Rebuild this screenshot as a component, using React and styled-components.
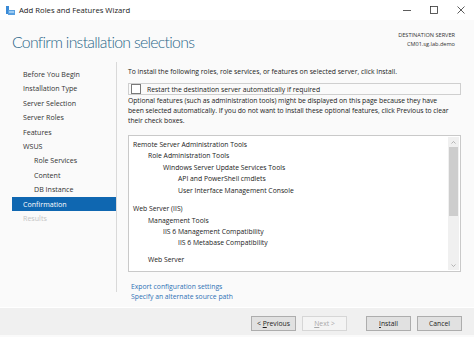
import styled, { createGlobalStyle } from "styled-components";

const Global = createGlobalStyle`
  html, body { margin: 0; padding: 0; background: #fff; }
  body { font-family: "Segoe UI", "Open Sans", "Noto Sans", sans-serif; }
`;

const Window = styled.div`
  width: 474px;
  height: 337px;
  display: flex;
  flex-direction: column;
  background: #fafafa;
  overflow: hidden;
  color: #1a1a1a;
`;

const TitleBar = styled.div`
  height: 20px;
  background: #fff;
  display: flex;
  align-items: center;
  padding-left: 6px;
  font-size: 7.7px;
  color: #222;
`;

const AppIcon = styled.svg`
  width: 9px;
  height: 9px;
  margin-right: 4px;
`;

const TitleText = styled.span`
  flex: 1;
`;

const WinButton = styled.div`
  width: 27px;
  height: 20px;
  display: flex;
  align-items: center;
  justify-content: center;
`;

const Header = styled.div`
  height: 40px;
  display: flex;
  justify-content: space-between;
  align-items: flex-start;
  padding: 0 19px 0 12px;
`;

const PageTitle = styled.h1`
  margin: 12px 0 0;
  font-family: "Lato", "Open Sans", sans-serif;
  font-size: 15.8px;
  font-weight: 300;
  letter-spacing: -0.7px;
  color: #2a6789;
`;

const ServerInfo = styled.div`
  margin-top: 11px;
  text-align: right;
  font-size: 5.6px;
  line-height: 9px;
  color: #333;
`;

const Main = styled.div`
  flex: 1;
  display: flex;
  min-height: 0;
`;

const Nav = styled.div`
  width: 116px;
  margin: 2px 0 15px;
  border-right: 1px solid #d9d9d9;
  padding-top: 5px;
  display: flex;
  flex-direction: column;
`;

const NavItem = styled.div`
  height: 14.4px;
  line-height: 14.4px;
  margin-left: 12px;
  padding-left: ${(p) => (p.$sub ? 22 : 11)}px;
  font-size: 7.1px;
  color: ${(p) => (p.$active ? "#fff" : p.$disabled ? "#c4c4c4" : "#333")};
  background: ${(p) => (p.$active ? "#0f67b1" : "transparent")};
`;

const Content = styled.div`
  flex: 1;
  padding: 6px 13px 0 11px;
  display: flex;
  flex-direction: column;
  font-size: 6.8px;
  color: #222;
`;

const Intro = styled.div`
  line-height: 11px;
`;

const CheckRow = styled.label`
  margin-top: 6px;
  height: 10px;
  border: 1px solid #cfcfcf;
  display: flex;
  align-items: center;
  gap: 6px;
  padding-left: 2px;
`;

const CheckBox = styled.span`
  width: 8px;
  height: 8px;
  border: 1px solid #7a7a7a;
  background: #fff;
`;

const Note = styled.p`
  margin: 1px 0 0;
  line-height: 10px;
  white-space: nowrap;
  letter-spacing: -0.04px;
`;

const ListBox = styled.div`
  margin-top: 9px;
  height: 135px;
  border: 1px solid #c9c9c9;
  background: #fff;
  display: flex;
`;

const ListItems = styled.div`
  flex: 1;
  padding: 3px 0 0 4px;
`;

const ListItem = styled.div`
  height: ${(p) => p.$h || 11.3}px;
  line-height: 11.3px;
  padding-left: ${(p) => p.$level * 15}px;
`;

const ScrollBar = styled.div`
  width: 11px;
  margin: 1px 1px 1px 0;
  background: #f0f0f0;
  display: flex;
  flex-direction: column;
  align-items: center;
`;

const ScrollArrow = styled.div`
  height: 10px;
  display: flex;
  align-items: center;
  justify-content: center;
`;

const ScrollThumb = styled.div`
  width: 9px;
  height: 69px;
  background: #cdcdcd;
`;

const ScrollTrack = styled.div`
  flex: 1;
`;

const Links = styled.div`
  margin-top: 10px;
  padding-left: 3px;
  display: flex;
  flex-direction: column;
  line-height: 9.5px;
`;

const Link = styled.a`
  color: #2f72b5;
  text-decoration: none;
`;

const Footer = styled.div`
  height: 28px;
  margin-bottom: 2px;
  border-top: 1px solid #fff;
  background: #f0f0f0;
  display: flex;
  align-items: flex-start;
  justify-content: flex-end;
  padding: 8px 12px 0 0;
  box-sizing: border-box;
`;

const Button = styled.button`
  width: 45px;
  height: 15px;
  margin-left: ${(p) => p.$gap || 6}px;
  padding: 0;
  font-family: inherit;
  font-size: 6.8px;
  color: ${(p) => (p.disabled ? "#a8a8a8" : "#222")};
  background: ${(p) => (p.disabled ? "#f4f4f4" : "#e1e1e1")};
  border: 1px solid ${(p) => (p.disabled ? "#d6d6d6" : "#adadad")};
  u { text-decoration: underline; }
`;

const items = [
  { t: "Remote Server Administration Tools", l: 0 },
  { t: "Role Administration Tools", l: 1 },
  { t: "Windows Server Update Services Tools", l: 2 },
  { t: "API and PowerShell cmdlets", l: 3, h: 12.5 },
  { t: "User Interface Management Console", l: 3, h: 18 },
  { t: "Web Server (IIS)", l: 0 },
  { t: "Management Tools", l: 1 },
  { t: "IIS 6 Management Compatibility", l: 2 },
  { t: "IIS 6 Metabase Compatibility", l: 3, h: 17 },
  { t: "Web Server", l: 1 },
];

export default function App() {
  return (
    <Window>
      <Global />
      <TitleBar>
        <AppIcon viewBox="0 0 9 9">
          <rect x="0" y="0" width="3" height="8" fill="#3a8ad6" />
          <rect x="2" y="4" width="7" height="5" fill="#5aa0e0" />
          <rect x="3" y="5" width="5" height="2" fill="#9ccbf2" />
        </AppIcon>
        <TitleText>Add Roles and Features Wizard</TitleText>
        <WinButton>
          <svg width="8" height="8" viewBox="0 0 8 8">
            <line x1="0" y1="4.5" x2="8" y2="4.5" stroke="#333" strokeWidth="0.8" />
          </svg>
        </WinButton>
        <WinButton>
          <svg width="8" height="8" viewBox="0 0 8 8">
            <rect x="0.5" y="0.5" width="7" height="7" fill="none" stroke="#333" strokeWidth="0.8" />
          </svg>
        </WinButton>
        <WinButton>
          <svg width="8" height="8" viewBox="0 0 8 8">
            <path d="M0.5 0.5 L7.5 7.5 M7.5 0.5 L0.5 7.5" stroke="#333" strokeWidth="0.8" />
          </svg>
        </WinButton>
      </TitleBar>
      <Header>
        <PageTitle>Confirm installation selections</PageTitle>
        <ServerInfo>
          DESTINATION SERVER
          <br />
          CM01.sg.lab.demo
        </ServerInfo>
      </Header>
      <Main>
        <Nav>
          <NavItem>Before You Begin</NavItem>
          <NavItem>Installation Type</NavItem>
          <NavItem>Server Selection</NavItem>
          <NavItem>Server Roles</NavItem>
          <NavItem>Features</NavItem>
          <NavItem>WSUS</NavItem>
          <NavItem $sub>Role Services</NavItem>
          <NavItem $sub>Content</NavItem>
          <NavItem $sub>DB Instance</NavItem>
          <NavItem $active>Confirmation</NavItem>
          <NavItem $disabled>Results</NavItem>
        </Nav>
        <Content>
          <Intro>
            To install the following roles, role services, or features on selected server, click Install.
          </Intro>
          <CheckRow>
            <CheckBox />
            Restart the destination server automatically if required
          </CheckRow>
          <Note>
            Optional features (such as administration tools) might be displayed on this page because they have
            <br />
            been selected automatically. If you do not want to install these optional features, click Previous to clear
            <br />
            their check boxes.
          </Note>
          <ListBox>
            <ListItems>
              {items.map((it) => (
                <ListItem key={it.t} $level={it.l} $h={it.h}>
                  {it.t}
                </ListItem>
              ))}
            </ListItems>
            <ScrollBar>
              <ScrollArrow>
                <svg width="5" height="3" viewBox="0 0 5 3">
                  <path d="M0.5 2.5 L2.5 0.5 L4.5 2.5" fill="none" stroke="#999" strokeWidth="0.7" />
                </svg>
              </ScrollArrow>
              <ScrollThumb />
              <ScrollTrack />
              <ScrollArrow>
                <svg width="5" height="3" viewBox="0 0 5 3">
                  <path d="M0.5 0.5 L2.5 2.5 L4.5 0.5" fill="none" stroke="#999" strokeWidth="0.7" />
                </svg>
              </ScrollArrow>
            </ScrollBar>
          </ListBox>
          <Links>
            <Link>Export configuration settings</Link>
            <Link>Specify an alternate source path</Link>
          </Links>
        </Content>
      </Main>
      <Footer>
        <Button>
          &lt; <u>P</u>revious
        </Button>
        <Button disabled>
          <u>N</u>ext &gt;
        </Button>
        <Button $gap={19}>
          <u>I</u>nstall
        </Button>
        <Button>Cancel</Button>
      </Footer>
    </Window>
  );
}
